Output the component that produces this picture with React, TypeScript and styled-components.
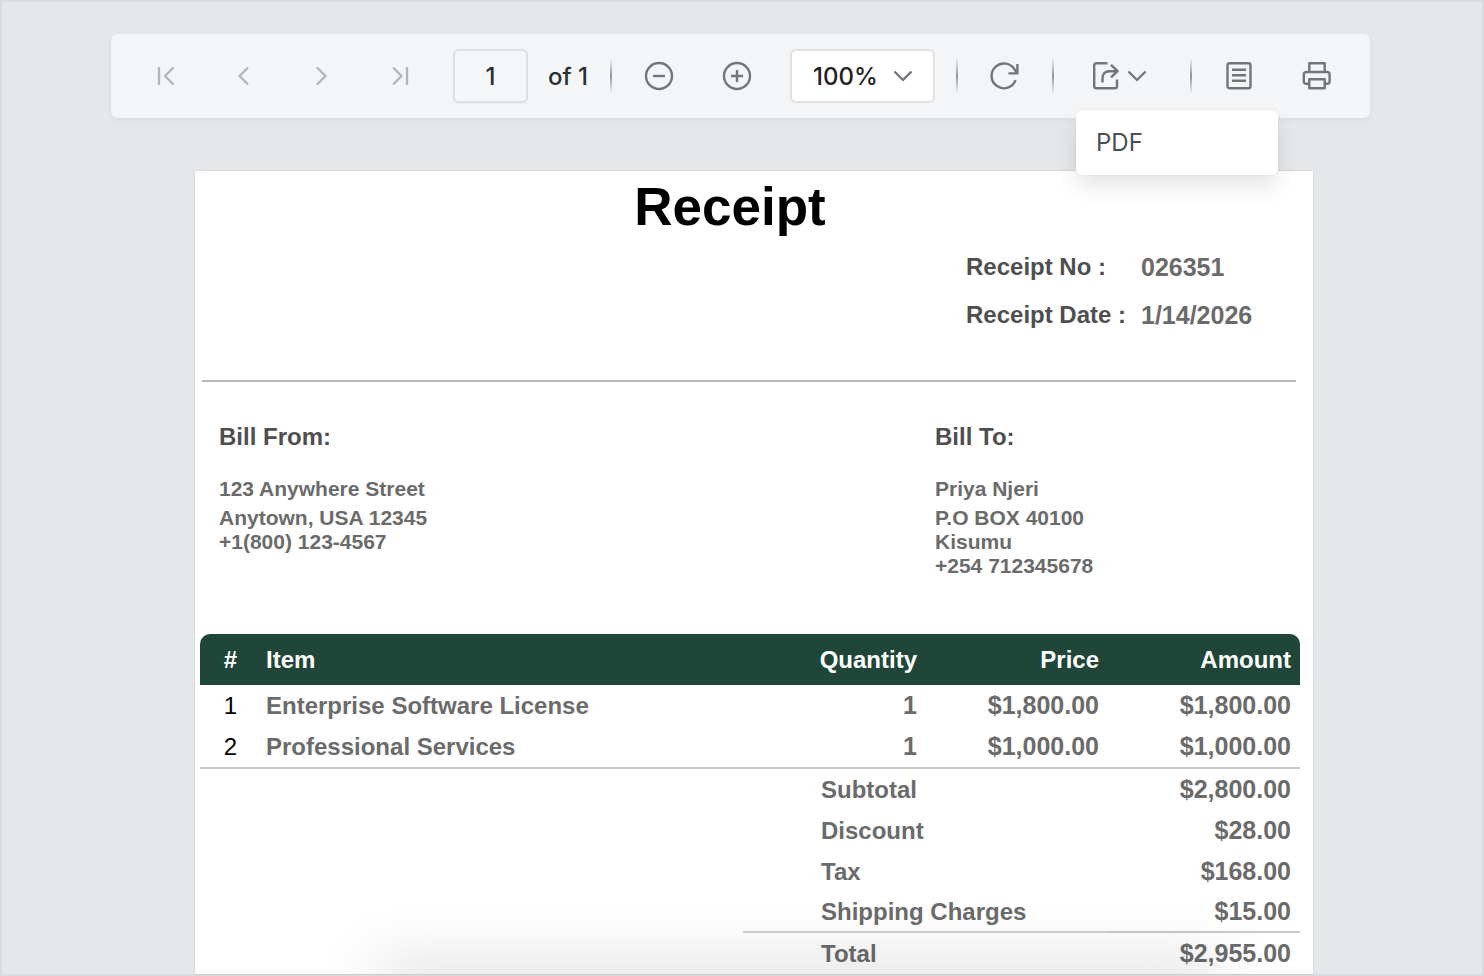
import React from "react";
import styled, { createGlobalStyle } from "styled-components";

const GlobalStyle = createGlobalStyle`
  *, *::before, *::after { box-sizing: border-box; }
  body { margin: 0; background: #e5e7eb; }
`;

const uiFont = `Inter, Roboto, "Liberation Sans", sans-serif`;
const docFont = `"Liberation Sans", Arial, sans-serif`;

const Viewer = styled.div`
  min-height: 100vh;
  display: flex;
  flex-direction: column;
  padding: 32px 112px 0 109px;
  border: 2px solid #dadbdd;
  background: #e5e7eb;
`;

const Toolbar = styled.div`
  display: flex;
  align-items: center;
  height: 84px;
  padding: 0 14px 0 16px;
  border-radius: 6px;
  background: #f4f5f7;
  box-shadow: 0 2px 5px rgba(0, 0, 0, 0.05);
  font-family: ${uiFont};
  font-size: 24px;
  color: #2b2f33;
`;

const ToolButton = styled.button`
  display: flex;
  align-items: center;
  justify-content: center;
  flex: none;
  width: 78px;
  height: 54px;
  padding: 0;
  border: 0;
  background: transparent;
  color: #72767b;
  cursor: pointer;

  &:disabled {
    color: #b3b5b8;
    cursor: default;
  }
`;

const ExportButton = styled(ToolButton)`
  width: 120px;
  padding-right: 4px;
`;

const PageInput = styled.input`
  flex: none;
  width: 75px;
  height: 54px;
  margin: 0 20px 0 14px;
  padding: 0;
  border: 2px solid #dfe0e3;
  border-radius: 6px;
  background: #f5f6f8;
  box-shadow: 0 1px 2px rgba(0, 0, 0, 0.06);
  font: inherit;
  font-weight: 500;
  color: inherit;
  text-align: center;
`;

const PageTotal = styled.span`
  flex: none;
  width: 54px;
  font-weight: 500;
  white-space: nowrap;
`;

const Separator = styled.span`
  flex: none;
  width: 2px;
  height: 36px;
  margin: 0 8px;
  background: linear-gradient(
    rgba(120, 124, 130, 0),
    rgba(120, 124, 130, 0.8) 50%,
    rgba(120, 124, 130, 0)
  );
`;

const ZoomField = styled.div`
  display: grid;
  flex: none;
  align-items: center;
  width: 145px;
  height: 54px;
  margin: 0 13px 0 14px;

  > * {
    grid-area: 1 / 1;
  }

  > svg {
    justify-self: end;
    margin-right: 22px;
    color: #72767b;
    pointer-events: none;
  }
`;

const ZoomSelect = styled.select`
  appearance: none;
  width: 100%;
  height: 100%;
  padding: 0 0 0 21px;
  border: 2px solid #dfe0e3;
  border-radius: 6px;
  background: #fff;
  font: inherit;
  font-weight: 500;
  color: #222;
`;

const ExportGroup = styled.div`
  position: relative;
  flex: none;
`;

const ExportMenu = styled.ul`
  position: absolute;
  z-index: 2;
  top: 61px;
  left: 14px;
  width: 202px;
  margin: 0;
  padding: 8px 0;
  list-style: none;
  border-radius: 6px;
  background: #fff;
  box-shadow: 0 0 2px rgba(0, 0, 0, 0.1), 0 12px 22px rgba(0, 0, 0, 0.1);
`;

const MenuItem = styled.button`
  display: block;
  width: 100%;
  height: 49px;
  padding: 0 20px;
  border: 0;
  background: none;
  font: inherit;
  color: #4b4f54;
  text-align: left;
`;

const Sheet = styled.main`
  position: relative;
  flex: 1;
  overflow: hidden;
  margin: 53px 57px 0 84px;
  padding: 6px 13px 0 5px;
  background: #fff;
  box-shadow: 0 0 2px rgba(0, 0, 0, 0.18);
  font-family: ${docFont};
  font-size: 24px;
  font-weight: 700;
  color: #6b6b6b;

  /* soft shade rising from the lower edge of the page */
  &::after {
    content: "";
    position: absolute;
    top: 100%;
    left: 185px;
    right: 95px;
    height: 20px;
    box-shadow: 0 0 64px 4px rgba(0, 0, 0, 0.22);
    pointer-events: none;
  }
`;

const Title = styled.h1`
  margin: 0 40px 6px 0;
  font-size: 53px;
  line-height: 60px;
  text-align: center;
  color: #000;
`;

const Meta = styled.dl`
  display: grid;
  grid-template-columns: 175px 159px;
  justify-content: end;
  margin: 0 0 41px;
  line-height: 48px;

  dt {
    color: #4f4f4f;
  }

  dd {
    margin: 0;
    font-size: 25px;
  }
`;

const Divider = styled.hr`
  height: 2px;
  margin: 0 4px 41px 2px;
  border: 0;
  background: #b9b9b9;
`;

const Parties = styled.div`
  display: grid;
  grid-template-columns: 1fr 365px;
  min-height: 155px;
  padding-left: 19px;
  margin-bottom: 56px;
`;

const PartyTitle = styled.h2`
  margin: 0 0 26px;
  font-size: 24px;
  line-height: 28px;
  color: #4f4f4f;
`;

const Address = styled.address`
  font-style: normal;
  font-size: 21px;
  line-height: 24px;
`;

const AddressName = styled.div`
  margin-bottom: 5px;
`;

const ItemTable = styled.table`
  width: 100%;
  table-layout: fixed;
  border-collapse: separate;
  border-spacing: 0;
`;

const HeadCell = styled.th<{ $align?: string }>`
  height: 51px;
  padding: ${(p) => (p.$align === "center" ? "0" : "0 9px 0 5px")};
  background: #1f4638;
  color: #fff;
  text-align: ${(p) => p.$align || "left"};

  &:first-child {
    border-top-left-radius: 10px;
  }

  &:last-child {
    border-top-right-radius: 10px;
  }
`;

const BodyCell = styled.td<{ $line?: boolean }>`
  height: 41px;
  padding: 0 9px 0 5px;
  border-bottom: ${(p) => (p.$line ? "2px solid #c8c8c8" : "0")};
`;

const NumberCell = styled(BodyCell)`
  font-size: 25px;
  text-align: right;
`;

const IndexCell = styled(BodyCell)`
  padding: 0;
  font-weight: 400;
  color: #000;
  text-align: center;
`;

const ItemRow = styled.tr<{ $last: boolean }>`
  height: ${(p) => (p.$last ? 43 : 41)}px;
`;

const TotalLabel = styled.th<{ $line?: boolean }>`
  height: 41px;
  padding: 0 0 0 78px;
  border-bottom: ${(p) => (p.$line ? "2px solid #d0d0d0" : "0")};
  text-align: left;
`;

const TotalRow = styled.tr`
  height: 41px;
`;

function Icon({ d, width = 32, children }: { d?: string; width?: number; children?: React.ReactNode }) {
  return (
    <svg
      width={width}
      height={32}
      viewBox={`0 0 ${width} 32`}
      fill="none"
      stroke="currentColor"
      strokeWidth={2.4}
      strokeLinejoin="round"
      aria-hidden="true"
    >
      {d && <path d={d} />}
      {children}
    </svg>
  );
}

const navButtons = [
  { label: "First page", d: "M9 7V25M23.5 7.5L15 16L23.5 24.5" },
  { label: "Previous page", d: "M20 7.5L11.5 16L20 24.5" },
  { label: "Next page", d: "M11 7.5L19.5 16L11 24.5" },
  { label: "Last page", d: "M9 7.5L17.5 16L9 24.5M23 7V25" },
];

const items = [
  { name: "Enterprise Software License", quantity: 1, price: "$1,800.00", amount: "$1,800.00" },
  { name: "Professional Services", quantity: 1, price: "$1,000.00", amount: "$1,000.00" },
];

const totals = [
  { label: "Subtotal", amount: "$2,800.00" },
  { label: "Discount", amount: "$28.00" },
  { label: "Tax", amount: "$168.00" },
  { label: "Shipping Charges", amount: "$15.00", line: true },
  { label: "Total", amount: "$2,955.00" },
];

function ViewerToolbar() {
  return (
    <Toolbar role="toolbar" aria-label="Report viewer">
      {navButtons.map((b) => (
        <ToolButton key={b.label} type="button" aria-label={b.label} disabled>
          <Icon d={b.d} />
        </ToolButton>
      ))}
      <PageInput aria-label="Page number" defaultValue="1" />
      <PageTotal>of 1</PageTotal>
      <Separator />
      <ToolButton type="button" aria-label="Zoom out">
        <Icon d="M10 16H22">
          <circle cx="16" cy="16" r="13" />
        </Icon>
      </ToolButton>
      <ToolButton type="button" aria-label="Zoom in">
        <Icon d="M10 16H22M16 10V22">
          <circle cx="16" cy="16" r="13" />
        </Icon>
      </ToolButton>
      <ZoomField>
        <ZoomSelect aria-label="Zoom level" defaultValue="100">
          <option value="100">100%</option>
        </ZoomSelect>
        <Icon width={20} d="M1.5 11.5L10 20L18.5 11.5" />
      </ZoomField>
      <Separator />
      <ToolButton type="button" aria-label="Refresh">
        <Icon d="M26.6 20.2A12.4 12.4 0 1 1 26 10.2L28 13.4M28.4 4V13.4H19.5" />
      </ToolButton>
      <Separator />
      <ExportGroup>
        <ExportButton type="button" aria-label="Export" aria-expanded="true">
          <Icon width={34} d="M14.5 3.3H3.2Q1.2 3.3 1.2 5.3V26.2Q1.2 28.2 3.2 28.2H22Q24 28.2 24 26.2V19.5M9.5 22.5V18.5Q9.5 11.2 16.5 11.2H24M18 4.8L24.6 11.2L18 17.4" />
          <Icon width={20} d="M1.5 11.5L10 20L18.5 11.5" />
        </ExportButton>
        <ExportMenu>
          <li>
            <MenuItem type="button">PDF</MenuItem>
          </li>
        </ExportMenu>
      </ExportGroup>
      <Separator />
      <ToolButton type="button" aria-label="Print layout">
        <Icon d="M9 9.7H23M9 15.2H23M9 20.7H23">
          <rect x="4.5" y="3.3" width="23" height="25" rx="2" />
        </Icon>
      </ToolButton>
      <ToolButton type="button" aria-label="Print">
        <Icon d="M8.3 12V3.3H23.7V12M8.3 23.8H5Q2.8 23.8 2.8 21.6V14.6Q2.8 12 5.4 12H26Q28.6 12 28.6 14.6V21.6Q28.6 23.8 26.4 23.8H23.7M8.3 19.2H23.7V28.3H8.3Z" />
      </ToolButton>
    </Toolbar>
  );
}

export default function App() {
  return (
    <>
      <GlobalStyle />
      <Viewer>
        <ViewerToolbar />
        <Sheet>
          <Title>Receipt</Title>
          <Meta>
            <dt>Receipt No :</dt>
            <dd>026351</dd>
            <dt>Receipt Date :</dt>
            <dd>1/14/2026</dd>
          </Meta>
          <Divider />
          <Parties>
            <section>
              <PartyTitle>Bill From:</PartyTitle>
              <Address>
                <AddressName>123 Anywhere Street</AddressName>
                <div>Anytown, USA 12345</div>
                <div>+1(800) 123-4567</div>
              </Address>
            </section>
            <section>
              <PartyTitle>Bill To:</PartyTitle>
              <Address>
                <AddressName>Priya Njeri</AddressName>
                <div>P.O BOX 40100</div>
                <div>Kisumu</div>
                <div>+254 712345678</div>
              </Address>
            </section>
          </Parties>
          <ItemTable>
            <colgroup>
              <col width="61" />
              <col />
              <col width="183" />
              <col width="182" />
              <col width="192" />
            </colgroup>
            <thead>
              <tr>
                <HeadCell $align="center">#</HeadCell>
                <HeadCell>Item</HeadCell>
                <HeadCell $align="right">Quantity</HeadCell>
                <HeadCell $align="right">Price</HeadCell>
                <HeadCell $align="right">Amount</HeadCell>
              </tr>
            </thead>
            <tbody>
              {items.map((item, i) => {
                const last = i === items.length - 1;
                return (
                  <ItemRow key={item.name} $last={last}>
                    <IndexCell $line={last}>{i + 1}</IndexCell>
                    <BodyCell $line={last}>{item.name}</BodyCell>
                    <NumberCell $line={last}>{item.quantity}</NumberCell>
                    <NumberCell $line={last}>{item.price}</NumberCell>
                    <NumberCell $line={last}>{item.amount}</NumberCell>
                  </ItemRow>
                );
              })}
            </tbody>
            <tfoot>
              {totals.map((t) => (
                <TotalRow key={t.label}>
                  <BodyCell colSpan={2} />
                  <TotalLabel colSpan={2} scope="row" $line={t.line}>{t.label}</TotalLabel>
                  <NumberCell $line={t.line}>{t.amount}</NumberCell>
                </TotalRow>
              ))}
            </tfoot>
          </ItemTable>
        </Sheet>
      </Viewer>
    </>
  );
}
